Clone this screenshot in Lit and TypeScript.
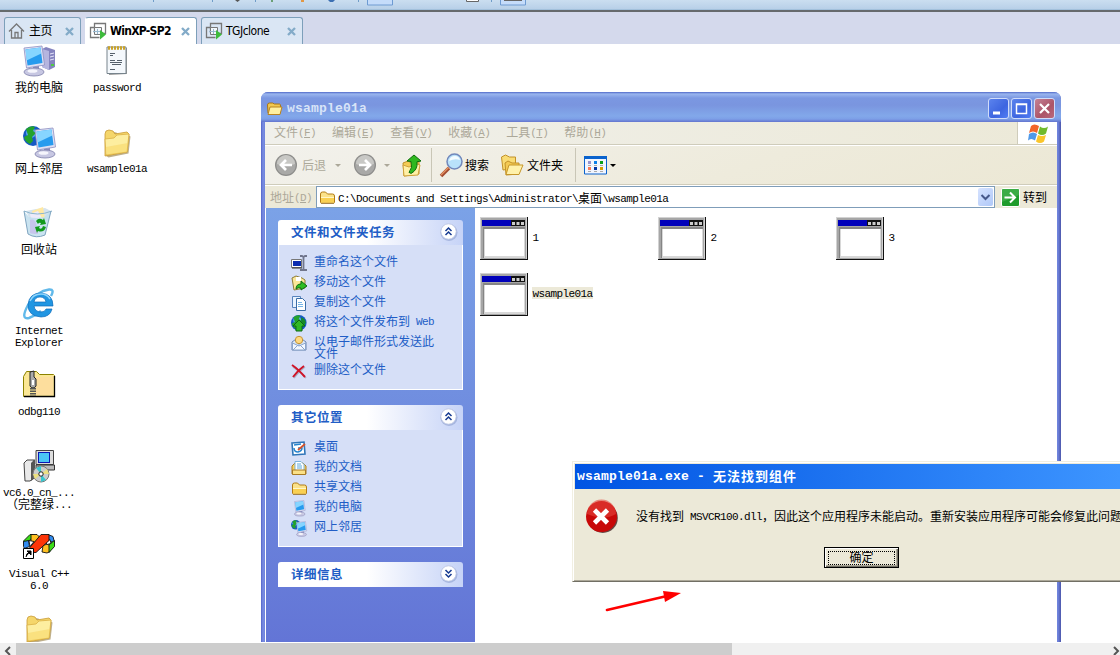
import { LitElement, html, svg, css } from 'lit'
import type { TemplateResult } from 'lit'
import { customElement, property } from 'lit/decorators.js'
import { classMap } from 'lit/directives/class-map.js'

const base = css`
  * {
    box-sizing: border-box;
  }

  :host {
    font: 12px/12px 'Noto Sans CJK SC', sans-serif;
  }

  svg {
    display: block;
    flex: none;
    overflow: visible;
  }

  .en {
    font-family: 'Liberation Mono', monospace;
    font-size: 11px;
    line-height: 0;
    letter-spacing: -0.6px;
    vertical-align: 1px;
    white-space: pre;
  }
`

// Latin runs take a half-width cell, CJK glyphs a full one
function mixed(text: string) {
  return text
    .split(/([\x20-\x7e]+)/)
    .filter(Boolean)
    .map((part) => (/^[\x20-\x7e]/.test(part) ? html`<span class="en">${part}</span>` : part))
}

function icon(name: string, width = 16, height = width, box = `0 0 ${width} ${height}`) {
  return html`<svg width=${width} height=${height} viewBox=${box}>${icons[name]}</svg>`
}

const bigFolder = svg`
  <path d="M5 8l3-3 7 1 2 3 9-1 3 2-2 17-20 4-3-2z" fill="#8a6d2a" opacity=".55" transform="translate(.5 .5)"/>
  <path d="M4 8l1-3 3-1 4 1 2 3 12-2 2 2-2 18-22 4z" fill="#f5d66b" stroke="#c99a32" stroke-width=".8"/>
  <path d="M4 13l9-1 3-3 12-1-2 18-21 3z" fill="#fdeea0" stroke="#dbb044" stroke-width=".8"/>
  <path d="M5 21l22-4-1 9-20 3z" fill="#f8d35e" opacity=".5"/>`

const smallFolder = svg`
  <path d="M1.500 5q0-2 2-2h3l2 2h5q2 0 2 2v6q0 1-1 1h-12q-1 0-1-1z" fill="#fbe28a" stroke="#b27c16"/>
  <path d="M2 8h13v5.500h-13z" fill="#f9d052"/>
  <path d="M2 8.500h13" stroke="#fff6c9"/>
  <path d="M2 14.500h13" stroke="#8a6420" opacity=".6"/>`

const monitor = svg`
  <path d="M1 3l18-2 2.500 19-18 3z" fill="#dfe0f3" stroke="#8d8fc1" stroke-width=".8"/>
  <path d="M2.500 4.500l15-2 2 15.500-15 2.500z" fill="#279bee"/>
  <path d="M2.500 4.500l15-2 .8 6-14.800 7z" fill="#87d5ff"/>
  <path d="M10 22l6-1v5l-6 1z" fill="#8a8cbc"/>
  <ellipse cx="11" cy="27" rx="10" ry="4" fill="#c7c7e2" stroke="#7e7fab" stroke-width=".8"/>
  <ellipse cx="9.500" cy="26" rx="5" ry="1.800" fill="#f5f5fc"/>`

const globe = svg`
  <circle cx="10" cy="10" r="10" fill="#1659c4"/>
  <circle cx="8" cy="7" r="5" fill="#56a5f3"/>
  <path d="M3 3q5-4 9-2l-2 4 3 2-4 4 1 4-3 3q-5-2-6-7l4-2z" fill="#23a22c"/>
  <path d="M13 3q6 2 6 7l-3 5-3-4z" fill="#178b28"/>`

const circleArrow = svg`
  <circle cx="11" cy="11" r="11" fill="#8c8c8a"/>
  <circle cx="11" cy="11" r="9.800" fill="#a9a9a7"/>
  <path d="M2 10a9 9 0 0 1 18 0q-9 4-18 0z" fill="#c8c8c5"/>
  <path d="M17 11H6M11 6l-5 5 5 5" fill="none" stroke="#fff" stroke-width="2.700"/>`

const icons: Record<string, TemplateResult | ReturnType<typeof svg>> = {
  computer: svg`
    <path d="M19 4l4-2 9 3v17l-6 3-7-3z" fill="#8584bf"/>
    <path d="M19 4l7 2v19l-7-3z" fill="#b5b5df"/>
    <path d="M27 9l4-1M27 12l4-1M27 15l4-1" stroke="#e5e5fa"/>
    <path d="M28 19h3v2h-3z" fill="#4fcb43"/>
    ${monitor}`,
  network: svg`
    <g>${globe}</g>
    <g transform="translate(11 1)">${monitor}</g>`,
  recycle: svg`
    <path d="M3 4l10-2 9-1 6 3-3 10-17 1z" fill="#d5e3ee"/>
    <path d="M9 4l11-4 2 12-10 3z" fill="#ffe9a4"/>
    <path d="M7 7l8-3 5 9-10 7z" fill="#eceafb"/>
    <path d="M1 4l4 23q8 5 17 1l6-24-7 6q-8 2-15 0z" fill="#c3dfee" opacity=".88"/>
    <path d="M1 4q13 6 28 0" fill="none" stroke="#8cb5cd"/>
    <path d="M7 13q4-2 6 3l2 11q-6 0-8-1z" fill="#c6b8ea" opacity=".7"/>
    <path d="M1 4l4 23q8 5 17 1l6-24" fill="none" stroke="#7fa5c0"/>
    <path d="M13 14q3-4 7-1l1-2 2 6-6 1 1-2q-2-1-3 1zM12 20l5-1-1 2q3 2 4-2l3 1q-2 6-8 4l-1 2z" fill="#129a1c"/>`,
  ie: svg`
    <path d="M28 8q4-7-2-6.500Q14 3 5 17q-8 15 1 13 6-2 12-7" fill="none" stroke="#61b9ea" stroke-width="2.400"/>
    <path d="M30 18H11q1 6 7 6 4 0 5-3h6q-2 8-11 8Q5 28 5 17 6 5 18 5q12 1 12 13zM11 14h12q-1-5-6-5-5 0-6 5z" fill="#2196e2" stroke="#0e6cba" stroke-width=".7"/>
    <path d="M7 13q3-7 11-7 6 0 9 5" fill="none" stroke="#8fd5fb" stroke-width="1.500"/>`,
  zip: svg`
    <path d="M.5 7.500l3-5h10l3 3h14l1 1v21H.5z" fill="#fbe795" stroke="#8c8200"/>
    <path d="M12 8h18v18H12z" fill="#ffd9a3" opacity=".6"/>
    <path d="M31.500 7v20.500H1" stroke="#000" stroke-width="1.300" fill="none"/>
    <path d="M7 3l4-1v6l2 2v7q-1 2-3 2t-3-2V9z" fill="#aaa" stroke="#222"/>
    <path d="M10 11v5" stroke="#fff" stroke-width="2"/>
    <path d="M10 19v8" stroke="#555" stroke-width="6" stroke-dasharray="1.500 1"/>`,
  setup: svg`
    <path d="M1 13l3-3h7v18l-4 3H2z" fill="#e9e9e9" stroke="#444"/>
    <path d="M8 13l4-4v19l-4 3z" fill="#555"/>
    <path d="M13 .5h17.500v14H13z" fill="#ddd" stroke="#444"/>
    <path d="M15 2h12v11H15z" fill="#0a16b4"/>
    <path d="M16 3h10v9H16z" fill="#4ac5f5"/>
    <path d="M13 15h18.500v5H13z" fill="#bbb" stroke="#333"/>
    <circle cx="18" cy="24" r="8" fill="#ccc" stroke="#777"/>
    <path d="M18 24l-5-6 5-2zM18 24l5 6-5 2z" fill="#37c7cf"/>
    <path d="M18 24l6-5 2 5zM18 24l-6 5-2-5z" fill="#ece080"/>
    <circle cx="18" cy="24" r="2.200" fill="#fff" stroke="#222"/>`,
  visual: svg`
    <g stroke="#111" stroke-width=".9" transform="translate(0 -.5)">
      <path d="M.5 10.500L7 4h3L8 9 1 13z" fill="#3bdc16"/>
      <path d="M8 4h6l4 4-6 4-4-1z" fill="#ffc021"/>
      <path d="M.5 11l5-1 1 6-5 2-1-2z" fill="#318cf0"/>
      <path d="M6 10l5 1-4 5z" fill="#fff"/>
      <path d="M20 15l6-2 1 8-3 1.500-5-1z" fill="#ffc021"/>
      <path d="M25 4l5 2 1.500 6-4-1-2-2z" fill="#318cf0"/>
      <path d="M31.500 10v6L26 22v-8z" fill="#3bdc16"/>
      <path d="M23 12l4-3 1 4-4 1z" fill="#fff"/>
      <path d="M6 18L18 4h8v6L13 22H8z" fill="#fc3508"/>
    </g>
    <path d="M.5 17.500h10v10H.5z" fill="#fff" stroke="#000"/>
    <path d="M3 26q0-4 4-5M4 20h4v4z" fill="#000" stroke="#000"/>`,
  notepad: svg`
    <path d="M8 3h18v26l-18 1z" fill="#9a9a9a"/>
    <path d="M6 2h19v26.500H6z" fill="#f4f8fc" stroke="#76838c"/>
    <path d="M7 3h18" stroke="#caa32a" stroke-width="3.500" stroke-dasharray="2 1"/>
    <path d="M9 8.500h5M9 10.500h3M9 15.500h5m2 0h5M9 17.500h12M11 19.500h9M9 24.500h5" stroke="#56616c"/>`,
  folder: bigFolder,
  smallFolder,
  winFolder: svg`
    <path d="M.5 4q0-2 2-2h3l2 1h5q1 0 1 2v7H1z" fill="#f1c84f" stroke="#a97416"/>
    <path d="M3 6h12l-2 7.500H1z" fill="#fff0a0" stroke="#b98420"/>`,
  back: circleArrow,
  forward: svg`<g transform="translate(22 0) scale(-1 1)">${circleArrow}</g>`,
  up: svg`
    <path d="M1 9l5-2 3 2 8-2v13l-15 2z" fill="#f4cb56" stroke="#c09227"/>
    <path d="M1 11l6 2 8-3 3 1-2 10-14 1z" fill="#fff0a7" stroke="#cfa13a"/>
    <path d="M5 7l7-6 7 6-4 .8q1 8-6 11.700-1-1-2-1 4-5 2-11z" fill="#2eb81f" stroke="#0d6d0b"/>`,
  search: svg`
    <path d="M1 22l8-8" stroke="#a34c30" stroke-width="3.500"/>
    <path d="M1 21l8-8" stroke="#e79464" stroke-width="1.300"/>
    <circle cx="14.500" cy="7.500" r="7.500" fill="#b9e2fb" stroke="#7288bb" stroke-width="1.500"/>
    <path d="M9 7q1-5 6-5 4 0 5 4-5-2-11 1z" fill="#f4fcff"/>`,
  folders: svg`
    <path d="M.5 3l4-2 4 2h6v11L2 16z" fill="#f9dc74" stroke="#c29128"/>
    <path d="M4 9l3-2 4 2h7v11l-13 1z" fill="#f4ca53" stroke="#c29128"/>
    <path d="M8 11h14l-4 9.500H5z" fill="#fff1aa" stroke="#c69629"/>`,
  views: svg`
    <path d="M.5 1h22v17H.5z" fill="#f1f5ff" stroke="#0a63cd"/>
    <path d="M0 1.500h23" stroke="#0a63cd" stroke-width="3"/>
    <path d="M4 5h3v3H4z" fill="#9794cd"/><path d="M10 5h3v3h-3z" fill="#0a7fe9"/><path d="M16 5h3v3h-3z" fill="#0ba017"/>
    <path d="M4 11h3v3H4z" fill="#fa7b55"/><path d="M10 11h3v3h-3z" fill="#0034a3"/><path d="M16 11h3v3h-3z" fill="#d5a000"/>
    <path d="M4 9.500h3m3 0h3m3 0h3M4 15.500h3m3 0h3m3 0h3" stroke="#aaa"/>`,
  flag: svg`
    <path d="M3 2q3-3 8 0l-2 7q-4-3-8 0z" fill="#f36429"/>
    <path d="M12 2.500q4 3 8 0l-2 7q-4 3-8 0z" fill="#71ba2c"/>
    <path d="M1 10q4-3 8 0l-2 6.500q-4-3-7 0z" fill="#4f99e8"/>
    <path d="M10 11q4 2 8 0l-2 6.500q-4 3-8 0z" fill="#fac52a"/>`,
  go: svg`
    <rect x=".5" y=".5" width="18" height="18" rx="1.500" fill="#1f9c2c" stroke="#fff"/>
    <path d="M1 1h17v6L1 14z" fill="#58bc60" opacity=".5"/>
    <path d="M3.500 9.500h10M9 4.500l5 5-5 5" fill="none" stroke="#fff" stroke-width="2"/>`,
  rename: svg`
    <path d="M.5 4.500h10v8H.5z" fill="#fff" stroke="#777"/>
    <path d="M1 13h10" stroke="#333"/>
    <path d="M2 6h8v5H2z" fill="#0b2cb0"/>
    <path d="M9 1h2l1.500 1 1.500-1h2M12.500 2v12M9 15h2l1.500-1 1.500 1h2" fill="none" stroke="#70758c" stroke-width="1.800"/>`,
  move: svg`
    <path d="M1 3l4-2 6 2 3 2v8L3 15z" fill="#fae798" stroke="#8e7c39"/>
    <path d="M5 2h5v4H5z" fill="#fff"/>
    <path d="M5 14q0-5 5-5V6l6 5-6 4v-2q-3-1-5 1z" fill="#2ebd22" stroke="#0b6c12"/>`,
  copy: svg`
    <path d="M1.500 1.500h8v11h-8z" fill="#e9f3ff" stroke="#5884bd"/>
    <path d="M5.500 3.500h6l3 3v9h-9z" fill="#fff" stroke="#3b6da7"/>
    <path d="M7 7.500h4m-4 2h5m-5 2h5" stroke="#75b4e7"/>`,
  publish: svg`
    <g transform="scale(.78)">${globe}</g>
    <path d="M8 5l6 6h-3v5H5v-5H2z" fill="#30b927" stroke="#0d6910"/>`,
  mail: svg`
    <path d="M1 7l7-5 7 5v8H1z" fill="#dbe8fa" stroke="#6e86ae"/>
    <circle cx="8" cy="5" r="3.700" fill="#ffd980" stroke="#c29439"/>
    <path d="M1.500 8L8 11l6.500-3v7h-13z" fill="#f2f7ff" stroke="#8aa5cc"/>
    <path d="M2 15l5-5h2l5 5" fill="none" stroke="#8aa5cc"/>`,
  remove: svg`
    <path d="M2 4q6 4 13 11M14 4Q8 8 3 15" fill="none" stroke="#8b8fa8" stroke-width="1.500" opacity=".6"/>
    <path d="M1 2q6 4 13 12M13 3Q7 7 2 14" fill="none" stroke="#cf1428" stroke-width="2"/>`,
  desktop: svg`
    <path d="M1 3l12-1 1 12-12 1z" fill="#fff" stroke="#2f75b8" stroke-width="1.600"/>
    <path d="M3 5l7-1M3 8q0 4 4 4 4-1 4-4H7" fill="none" stroke="#2484cf" stroke-width="1.500"/>
    <path d="M7 10l7-6" stroke="#d5532a" stroke-width="1.800"/>`,
  documents: svg`
    <path d="M1 6l3-3h8l3 3v8H1z" fill="#f8d260" stroke="#ad7e21"/>
    <path d="M4 1.500h6l3 3v7H4z" fill="#fff" stroke="#7bb3dc"/>
    <path d="M6 4h4m-4 2h5m-5 2h5" stroke="#5aa7dd"/>
    <path d="M1.500 10h13v4.500h-13z" fill="#fbe187" stroke="#a77b26"/>`,
  smallComputer: svg`<g transform="translate(3) scale(.52)">${monitor}</g>`,
  smallNetwork: svg`<g transform="scale(.48)">${globe}</g><g transform="translate(5 1) scale(.5)">${monitor}</g>`,
  app: svg`
    <path d="M0 0h48v43H0z" fill="#111"/>
    <path d="M0 0h47v42H0z" fill="#d2d2d2"/>
    <path d="M1 1h45v41H1z" fill="#a6a6a6"/>
    <path d="M2 3h43v6H2z" fill="#0000ba"/>
    <path d="M31 3h14v6H31z" fill="#111"/>
    <path d="M32 5h3v3h-3zm4.500 0h3v3h-3zm4.500 0h3v3h-3z" fill="#ccc"/>
    <path d="M3 10h42v31H3z" fill="#858585"/>
    <path d="M4 12h41v29H4z" fill="#d8d8d8"/>
    <path d="M5 12h39v27H5z" fill="#fff"/>`,
  error: svg`
    <circle cx="16.800" cy="17" r="15" fill="#432020" opacity=".8"/>
    <circle cx="15.500" cy="15.500" r="15.500" fill="#c80808"/>
    <path d="M1 13a14.500 14.500 0 0 1 29 0q-12 7-29 0z" fill="#e5443c" opacity=".6"/>
    <path d="M8.500 9l13 13M21.500 9l-13 13" stroke="#fff" stroke-width="4.600"/>`,
  home: svg`<path d="M0 8.500L7.500 1 15 8.500M2.500 7v8h10V7M6 14.500v-5h3v5" fill="none" stroke="#777" stroke-width="1.300"/>`,
  vm: svg`
    <path d="M4.500 10V.5h11v10h-4M4 4.500H.5v10h9" fill="none" stroke="#777" stroke-width="1.300"/>
    <path d="M4.500 4.500h7v7h-7z" fill="#f4f8fb" stroke="#777"/>
    <path d="M7.500 6v5M3 8.500h7" stroke="#99b9d0"/>
    <path d="M10 7l6 4.500-6 5z" fill="#3dbb3b"/>`,
  close: svg`<path d="M1 1l7 7M8 1L1 8" stroke="#83abc8" stroke-width="2.300"/>`,
  chevrons: svg`
    <circle cx="9" cy="9.500" r="8.500" fill="#8093c7" opacity=".5"/>
    <circle cx="8.500" cy="8.500" r="7.700" fill="#fff" stroke="#b8c2e0" stroke-width=".8"/>`,
}

@customElement('desktop-icon')
export class DesktopIcon extends LitElement {
  static styles = [
    base,
    css`
      :host {
        display: flex;
        flex-direction: column;
        align-items: center;
        gap: 4px;
        color: #000;
        white-space: nowrap;
      }

      .label {
        text-align: center;
      }

      .line {
        height: 12px;
      }
    `,
  ]

  @property() icon = 'folder'
  @property({ attribute: false }) lines: string[] = []

  render() {
    return html`
      ${icon(this.icon, 32)}
      <div class="label">${this.lines.map((line) => html`<div class="line">${mixed(line)}</div>`)}</div>
    `
  }
}

interface Task {
  icon: string
  lines: string[]
}

@customElement('task-panel')
export class TaskPanel extends LitElement {
  static styles = [
    base,
    css`
      :host {
        display: block;
        color: #215dc6;
      }

      .head {
        display: flex;
        align-items: center;
        justify-content: space-between;
        height: 25px;
        padding: 0 6px 2px 13px;
        border-radius: 3px 3px 0 0;
        background: linear-gradient(90deg, #fff 48%, #c6d3f7);
      }

      .title {
        margin-top: 1px;
        font-weight: bold;
        font-size: 12.500px;
        letter-spacing: 0.500px;
      }

      .list {
        display: flex;
        flex-direction: column;
        gap: 4px;
        padding: 10px 12px;
        border: 1px solid #fff;
        border-top: none;
        background: #d6dff7;
      }

      .task {
        display: flex;
        gap: 7px;
        min-height: 16px;
      }

      .task svg {
        margin-bottom: -4px;
      }
    `,
  ]

  @property() heading = ''
  @property({ attribute: false }) tasks: Task[] = []

  render() {
    const closed = this.tasks.length === 0
    const arrows = closed ? 'M5.500 5l3 3 3-3M5.500 9l3 3 3-3' : 'M5.500 8l3-3 3 3M5.500 12l3-3 3 3'

    return html`
      <div class="head">
        <span class="title">${this.heading}</span>
        <svg width="17" height="18">
          ${icons.chevrons}
          <path d=${arrows} fill="none" stroke="#163a91" stroke-width="1.500" />
        </svg>
      </div>
      ${closed
        ? ''
        : html`<div class="list">
            ${this.tasks.map(
              (task) => html`
                <div class="task">
                  ${icon(task.icon)}
                  <div>${task.lines.map((line) => html`<div>${mixed(line)}</div>`)}</div>
                </div>
              `
            )}
          </div>`}
    `
  }
}

@customElement('explorer-window')
export class ExplorerWindow extends LitElement {
  static styles = [
    base,
    css`
      :host {
        display: flex;
        flex-direction: column;
        padding: 0 4px;
        border-radius: 7px 7px 0 0;
        overflow: hidden;
        background: linear-gradient(90deg, #5465c8, #7a8de2 2px, #6f83dc 4px, #6f83dc 797px, #4b56ab);
      }

      .title {
        display: flex;
        align-items: center;
        height: 30px;
        margin: 0 -4px;
        padding: 3px 6px 0;
        background: linear-gradient(#5069c8, #99b5ee 2px, #7b98e2 6px, #7a95df 13px, #82a8ea 24px, #7d9fe7 27px, #6374ce);
      }

      .name {
        flex: 1;
        margin-left: 4px;
        color: #d8e4f8;
        font: bold 13px/14px 'Liberation Mono', monospace;
        letter-spacing: 0.200px;
      }

      .buttons {
        display: flex;
        gap: 2px;
      }

      .button {
        width: 21px;
        height: 21px;
        border: 1px solid #d0dcfa;
        border-radius: 3px;
        background: linear-gradient(135deg, #5b83ed, #3d65e0 60%, #517df4);
      }

      .red {
        background: linear-gradient(135deg, #c48295, #ac5468 60%, #b9697c);
      }

      .menubar {
        display: flex;
        height: 23px;
        border-bottom: 1px solid #cfccbb;
        background: linear-gradient(90deg, #f0f0eb, #ece9d8);
        color: #aca899;
      }

      .menus {
        display: flex;
        flex: 1;
        gap: 16px;
        padding: 4px 9px;
        border-right: 1px solid #cfccbb;
      }

      .key {
        text-decoration: underline;
      }

      .logo {
        width: 39px;
        padding: 2px 10px;
        background: #fff;
      }

      .toolbar {
        display: flex;
        align-items: center;
        height: 40px;
        padding: 0 10px;
        border-top: 1px solid #fff;
        border-bottom: 1px solid #cfccbb;
        background: linear-gradient(160deg, #f2f1ec, #eeebdc 60%, #ece8d5);
      }

      .group {
        display: flex;
        align-items: center;
      }

      .history {
        width: 156px;
      }

      .off {
        color: #aca899;
      }

      .arrow {
        border: 3px solid transparent;
        border-top-color: currentColor;
        border-bottom: none;
      }

      .wide {
        margin: 0 13px 0 9px;
      }

      .separator {
        width: 1px;
        height: 34px;
        background: #c9c6b6;
      }

      .gap-xs { margin-left: 3px; }
      .gap-s { margin-left: 5px; }
      .gap-m { margin-left: 8px; }
      .gap-l { margin-left: 12px; }

      .address {
        display: flex;
        align-items: center;
        height: 23px;
        padding-left: 5px;
        border-top: 1px solid #fff;
        background: #ece9d8;
      }

      .field {
        display: flex;
        align-items: center;
        width: 679px;
        height: 22px;
        margin: 0 6px 0 4px;
        padding: 0 1px 0 2px;
        border: 1px solid #7f9db9;
        background: #fff;
        color: #000;
      }

      .path {
        flex: 1;
        margin: 1px 0 0 3px;
      }

      .drop {
        display: flex;
        align-items: center;
        justify-content: center;
        width: 15px;
        height: 18px;
        border-radius: 2px;
        background: linear-gradient(135deg, #d7e3ff, #afc8f8);
      }

      .body {
        display: flex;
        flex: 1;
        background: #fff;
      }

      .side {
        display: flex;
        flex-direction: column;
        gap: 15px;
        width: 210px;
        padding: 12px 12px 0;
        border-left: 1px solid #fff;
        background: linear-gradient(#7ba2e7, #6375d6);
      }

      .files {
        display: grid;
        grid-template-columns: repeat(3, 178px);
        grid-auto-rows: 56px;
        align-content: start;
        padding: 9px 0 0 5px;
      }

      .file {
        display: flex;
        align-items: flex-start;
        gap: 4px;
      }

      .caption {
        margin-top: 14px;
        padding-left: 0.500px;
      }

      .selected {
        background: #ece9d8;
      }
    `,
  ]

  private menus = [
    ['文件', 'F'],
    ['编辑', 'E'],
    ['查看', 'V'],
    ['收藏', 'A'],
    ['工具', 'T'],
    ['帮助', 'H'],
  ]

  private fileTasks: Task[] = [
    { icon: 'rename', lines: ['重命名这个文件'] },
    { icon: 'move', lines: ['移动这个文件'] },
    { icon: 'copy', lines: ['复制这个文件'] },
    { icon: 'publish', lines: ['将这个文件发布到 Web'] },
    { icon: 'mail', lines: ['以电子邮件形式发送此', '文件'] },
    { icon: 'remove', lines: ['删除这个文件'] },
  ]

  private places: Task[] = [
    { icon: 'desktop', lines: ['桌面'] },
    { icon: 'documents', lines: ['我的文档'] },
    { icon: 'smallFolder', lines: ['共享文档'] },
    { icon: 'smallComputer', lines: ['我的电脑'] },
    { icon: 'smallNetwork', lines: ['网上邻居'] },
  ]

  render() {
    return html`
      <div class="title">
        ${icon('winFolder')}
        <span class="name">wsample01a</span>
        <div class="buttons">
          <div class="button">
            <svg width="19" height="19"><path d="M4 14h7" stroke="#fff" stroke-width="3" /></svg>
          </div>
          <div class="button">
            <svg width="19" height="19"><path d="M4.500 5h10v9.500h-10zM4 5.500h11" fill="none" stroke="#fff" stroke-width="1.500" /></svg>
          </div>
          <div class="button red">
            <svg width="19" height="19"><path d="M5 5l9 9M14 5l-9 9" stroke="#fff" stroke-width="2.200" /></svg>
          </div>
        </div>
      </div>

      <div class="menubar">
        <div class="menus">
          ${this.menus.map(
            ([label, key]) => html`<span>${label}<span class="en">(<span class="key">${key}</span>)</span></span>`
          )}
        </div>
        <div class="logo">${icon('flag', 20, 19)}</div>
      </div>

      <div class="toolbar">
        <div class="group history">
          ${icon('back', 22)}
          <span class="off gap-s">后退</span>
          <i class="arrow off wide"></i>
          ${icon('forward', 22)}
          <i class="arrow off gap-m"></i>
          <span class="gap-l">${icon('up', 22)}</span>
        </div>
        <i class="separator"></i>
        <div class="group gap-m">
          ${icon('search', 22)}
          <span class="gap-xs">搜索</span>
          <span class="gap-l">${icon('folders', 23, 22)}</span>
          <span class="gap-xs">文件夹</span>
        </div>
        <i class="separator gap-l"></i>
        <div class="group gap-m">
          ${icon('views', 23, 19)}
          <i class="arrow gap-xs"></i>
        </div>
      </div>

      <div class="address">
        <span class="off">${mixed('地址')}<span class="en">(<span class="key">D</span>)</span></span>
        <div class="field">
          ${icon('smallFolder')}
          <span class="path">${mixed('C:\\Documents and Settings\\Administrator\\桌面\\wsample01a')}</span>
          <span class="drop">
            <svg width="9" height="6"><path d="M.5 1l4 4 4-4" fill="none" stroke="#46588a" stroke-width="2" /></svg>
          </span>
        </div>
        ${icon('go', 19)}
        <span class="gap-xs">转到</span>
      </div>

      <div class="body">
        <div class="side">
          <task-panel heading="文件和文件夹任务" .tasks=${this.fileTasks}></task-panel>
          <task-panel heading="其它位置" .tasks=${this.places}></task-panel>
          <task-panel heading="详细信息"></task-panel>
        </div>
        <div class="files">
          ${['1', '2', '3', 'wsample01a'].map(
            (name) => html`
              <div class="file">
                ${icon('app', 48, 43)}
                <span class=${classMap({ caption: true, selected: name === 'wsample01a' })}>${mixed(name)}</span>
              </div>
            `
          )}
        </div>
      </div>
    `
  }
}

@customElement('error-dialog')
export class ErrorDialog extends LitElement {
  static styles = [
    base,
    css`
      :host {
        display: flex;
        flex-direction: column;
        padding: 2px;
        border: 1px solid #f1efe2;
        border-bottom-color: #716f64;
        background: #ece9d8;
        box-shadow: inset 1px 1px #fff, inset 0 -1px #aca899;
        color: #000;
        white-space: nowrap;
      }

      .title {
        height: 25px;
        padding: 4px 2px;
        background: linear-gradient(90deg, #0054e3, #3d95ff 545px);
        color: #fff;
        font-weight: bold;
        font-size: 13px;
        line-height: 15px;
        letter-spacing: 1px;
      }

      .title .en {
        font-size: 13px;
        letter-spacing: 0.200px;
      }

      .message {
        display: flex;
        gap: 17px;
        padding: 12px 11px 0;
      }

      .text {
        margin-top: 9px;
      }

      .button {
        width: 75px;
        height: 21px;
        margin: 13px 0 0 249px;
        padding: 2px;
        border: 1px solid #000;
        box-shadow: inset 1px 1px #fff, inset -1px -1px #716f64, inset -2px -2px #aca899;
        text-align: center;
      }

      .focus {
        height: 14px;
        margin: 1px 1px 0;
        border: 1px dotted #000;
        line-height: 9px;
      }
    `,
  ]

  render() {
    return html`
      <div class="title">${mixed('wsample01a.exe - 无法找到组件')}</div>
      <div class="message">
        ${icon('error', 33)}
        <span class="text">${mixed('没有找到 MSVCR100.dll，因此这个应用程序未能启动。重新安装应用程序可能会修复此问题')}</span>
      </div>
      <div class="button"><div class="focus">确定</div></div>
    `
  }
}

@customElement('app-root')
export class AppRoot extends LitElement {
  static styles = [
    base,
    css`
      :host {
        display: flex;
        flex-direction: column;
        position: relative;
        width: 1120px;
        height: 655px;
        overflow: hidden;
        background: #fff;
      }

      .strip {
        height: 12px;
        border-bottom: 2px solid #666a6d;
        background: linear-gradient(#cbdef0, #b8d0e8 9px, #8db1cf);
      }

      .tabs {
        display: flex;
        align-items: flex-end;
        gap: 4px;
        height: 32px;
        padding-left: 4px;
        background: #d4d9ec;
      }

      .tab {
        display: flex;
        align-items: center;
        height: 27px;
        padding: 0 6px 0 4px;
        border: 1px solid #7d9fba;
        border-bottom: none;
        border-radius: 3px 3px 0 0;
        background: #dae6f4;
        color: #000;
        font-family: 'DejaVu Sans Condensed', 'DejaVu Sans', 'Noto Sans CJK SC', sans-serif;
        white-space: nowrap;
      }

      .tab.active {
        border-left-color: #fff;
        background: #fff;
        font-weight: bold;
      }

      .name {
        flex: 1;
        margin-left: 4px;
        letter-spacing: -0.500px;
      }

      .active .name {
        letter-spacing: -0.700px;
      }

      .desktop {
        position: relative;
        height: 598px;
        margin-bottom: 1px;
        overflow: hidden;
      }

      .icons {
        display: grid;
        grid-auto-flow: column;
        grid-template-rows: repeat(8, 81px);
        grid-auto-columns: 78px;
        justify-content: start;
        padding-top: 1px;
      }

      explorer-window {
        position: absolute;
        left: 261px;
        top: 48px;
        width: 800px;
        height: 550px;
      }

      error-dialog {
        position: absolute;
        left: 572px;
        top: 417px;
        width: 620px;
        height: 121px;
      }

      .pointer {
        position: absolute;
        left: 605px;
        top: 544px;
      }

      .scroll {
        display: flex;
        align-items: center;
        justify-content: space-between;
        height: 12px;
        background: #f0f0f0;
      }

      .thumb {
        width: 716px;
        height: 12px;
        margin-right: auto;
        background: #cdcdcd;
      }

      .step {
        width: 16px;
        padding: 3px 0 0 5px;
      }

      .step.end {
        width: 7px;
        padding-left: 0;
      }
    `,
  ]

  private tabs = [
    { icon: 'home', name: '主页', width: 77 },
    { icon: 'vm', name: 'WinXP-SP2', width: 112, active: true },
    { icon: 'vm', name: 'TGJclone', width: 102 },
  ]

  private shortcuts = [
    { icon: 'computer', lines: ['我的电脑'] },
    { icon: 'network', lines: ['网上邻居'] },
    { icon: 'recycle', lines: ['回收站'] },
    { icon: 'ie', lines: ['Internet', 'Explorer'] },
    { icon: 'zip', lines: ['odbg110'] },
    { icon: 'setup', lines: ['vc6.0_cn_...', '（完整绿...'] },
    { icon: 'visual', lines: ['Visual C++', '6.0'] },
    { icon: 'folder', lines: [] },
    { icon: 'notepad', lines: ['password'] },
    { icon: 'folder', lines: ['wsample01a'] },
  ]

  render() {
    return html`
      <div class="strip">
        <svg width="1120" height="9">
          <path d="M153.500 0v2M212.500 0v2M255.500 0v2M358.500 0v2M491.500 0v2" stroke="#6f9cc8" />
          <path d="M235 0h5l-2.500 2z" fill="#555" />
          <path d="M271 0h2v2h-2z" fill="#6a9f75" />
          <path d="M301 0h3v2h-3z" fill="#e19745" />
          <path d="M328 0h7l-2 2h-3z" fill="#3d70b3" />
          <path d="M367.500-2h25v7h-25zM500.500-2h25v7h-25z" fill="#c5dcfa" stroke="#6e9bd2" />
          <path d="M466.500-2h12v3.500h-12z" fill="#fff" stroke="#666" />
          <path d="M504 .5h18" stroke="#666" />
        </svg>
      </div>
      <div class="tabs">
        ${this.tabs.map(
          (tab) => html`
            <div class=${classMap({ tab: true, active: !!tab.active })} style="width:${tab.width}px">
              ${icon(tab.icon)}
              <span class="name">${tab.name}</span>
              ${icon('close', 9)}
            </div>
          `
        )}
      </div>
      <div class="desktop">
        <div class="icons">
          ${this.shortcuts.map((item) => html`<desktop-icon .icon=${item.icon} .lines=${item.lines}></desktop-icon>`)}
        </div>
        <explorer-window></explorer-window>
        <error-dialog></error-dialog>
        <svg class="pointer" width="78" height="26">
          <path d="M2 22L62 8" stroke="#f00" stroke-width="2.700" stroke-linecap="round" />
          <path d="M58 3l18 2-16 9z" fill="#f00" />
        </svg>
      </div>
      <div class="scroll">
        <span class="step"><svg width="6" height="8"><path d="M5 0L1 4l4 4" fill="none" stroke="#555" stroke-width="2" /></svg></span>
        <span class="thumb"></span>
        <span class="step end"><svg width="6" height="8"><path d="M1 0l4 4-4 4" fill="none" stroke="#555" stroke-width="2" /></svg></span>
      </div>
    `
  }
}
